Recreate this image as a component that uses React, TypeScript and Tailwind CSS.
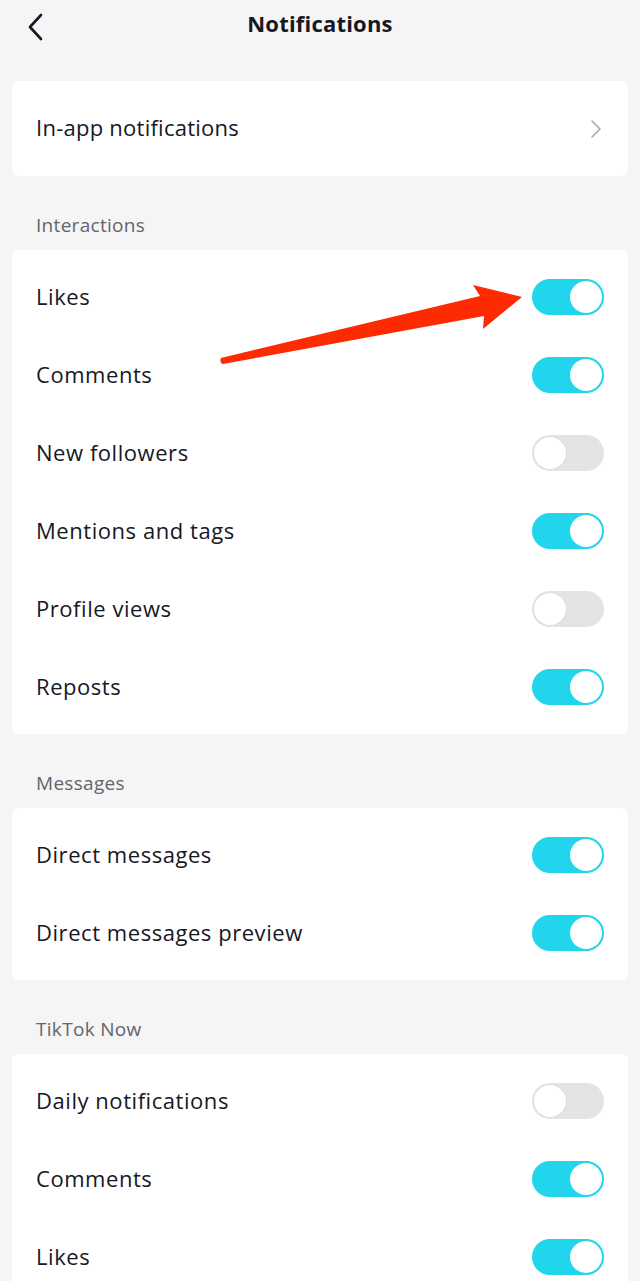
import { useState } from 'react';

type Item = { label: string; on: boolean };

const sections: { title: string; items: Item[] }[] = [
  {
    title: 'Interactions',
    items: [
      { label: 'Likes', on: true },
      { label: 'Comments', on: true },
      { label: 'New followers', on: false },
      { label: 'Mentions and tags', on: true },
      { label: 'Profile views', on: false },
      { label: 'Reposts', on: true },
    ],
  },
  {
    title: 'Messages',
    items: [
      { label: 'Direct messages', on: true },
      { label: 'Direct messages preview', on: true },
    ],
  },
  {
    title: 'TikTok Now',
    items: [
      { label: 'Daily notifications', on: false },
      { label: 'Comments', on: true },
      { label: 'Likes', on: true },
    ],
  },
];

function Toggle({ initial }: { initial: boolean }) {
  const [on, setOn] = useState(initial);
  return (
    <button
      onClick={() => setOn(!on)}
      className={`flex h-[36px] w-[72px] items-center rounded-full p-[2px] ${
        on ? 'justify-end bg-[#20d5ec]' : 'justify-start bg-[#e3e4e6]'
      }`}
    >
      <span
        className={`block h-[32px] w-[32px] rounded-full bg-white ${
          on ? '' : 'shadow-[0_0_0_1px_#dcdde0]'
        }`}
      />
    </button>
  );
}

export default function App() {
  return (
    <div className="relative min-h-[1281px] bg-[#f5f5f5] font-['Open_Sans','Liberation_Sans',sans-serif] text-[#161823]">
      {/* Header */}
      <header className="relative flex h-[46px] items-center justify-center">
        <button className="absolute left-[22px] top-[9px] p-1">
          <svg width="18" height="28" viewBox="0 0 18 28" fill="none">
            <path d="M15 2 L4 14 L15 26" stroke="#161823" strokeWidth="2.6" strokeLinecap="round" strokeLinejoin="round" />
          </svg>
        </button>
        <h1 className="text-[22px] font-bold tracking-[0.2px]">Notifications</h1>
      </header>

      <div className="px-[12px] pt-[35px]">
        <div className="flex h-[95px] items-center justify-between rounded-[6px] bg-white pl-[24px] pr-[26px]">
          <span className="-mt-[2px] text-[22px] font-medium tracking-[0.25px]">In-app notifications</span>
          <svg width="12" height="20" viewBox="0 0 12 20" fill="none">
            <path d="M2 2 L10 10 L2 18" stroke="#a7a7ab" strokeWidth="1.6" strokeLinecap="round" strokeLinejoin="round" />
          </svg>
        </div>

        {sections.map((s) => (
          <section key={s.title}>
            <div className="flex h-[74px] items-end pb-[11px] pl-[24px] text-[19px] font-medium tracking-[0.3px] text-[#64646c]">{s.title}</div>
            <div className="rounded-[6px] bg-white py-[8px] pl-[24px] pr-[24px]">
              {s.items.map((it, i) => (
                <div key={i} className="flex h-[78px] items-center justify-between">
                  <span className="-mt-[2px] text-[22px] font-medium tracking-[0.55px]">{it.label}</span>
                  <Toggle initial={it.on} />
                </div>
              ))}
            </div>
          </section>
        ))}
      </div>

      {/* Callout arrow pointing at the Likes switch */}
      <svg className="pointer-events-none absolute left-0 top-0" width="640" height="400" viewBox="0 0 640 400">
        <path
          d="M221 358 L480 296 L473 285 L522 297 L483 329 L484 316 L223 364 Q219 362 221 358 Z"
          fill="#fe2a02"
        />
      </svg>
    </div>
  );
}
